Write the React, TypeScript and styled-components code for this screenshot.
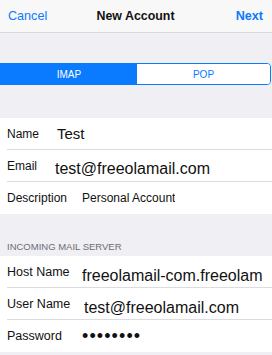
import React from "react";
import styled, { createGlobalStyle } from "styled-components";

const Global = createGlobalStyle`
  html, body { margin: 0; padding: 0; background: #efeff4; overflow: hidden; }
  body { font-family: "Liberation Sans", Arial, sans-serif; -webkit-font-smoothing: antialiased; }
  * { box-sizing: border-box; }
`;

const Screen = styled.div`
  width: 272px;
  height: 355px;
  background: #efeff4;
  overflow: hidden;
  display: flex;
  flex-direction: column;
`;

const NavBar = styled.div`
  height: 33px;
  flex: none;
  display: grid;
  grid-template-columns: 1fr auto 1fr;
  align-items: center;
  padding: 0 9px 1px 8px;
  background: #f8f8f8;
  border-bottom: 1px solid #d9d9dc;
`;

const NavButton = styled.span<{ $bold?: boolean; $end?: boolean }>`
  color: #0a7aff;
  font-size: 12.6px;
  font-weight: ${(p) => (p.$bold ? 700 : 400)};
  justify-self: ${(p) => (p.$end ? "end" : "start")};
`;

const Title = styled.span`
  font-size: 12.4px;
  font-weight: 700;
  color: #111;
`;

const SegmentWrap = styled.div`
  padding: 30px 1px 33px 0;
  flex: none;
`;

const Segmented = styled.div`
  display: grid;
  grid-template-columns: 141px 1fr;
  height: 22px;
  margin-left: -5px;
  border: 1px solid #0a7aff;
  border-radius: 4px;
  overflow: hidden;
  background: #fff;
`;

const Segment = styled.div<{ $active?: boolean }>`
  display: flex;
  align-items: center;
  justify-content: center;
  padding-left: ${(p) => (p.$active ? "5px" : "0")};
  font-size: 10px;
  color: ${(p) => (p.$active ? "#fff" : "#0a7aff")};
  background: ${(p) => (p.$active ? "#0a7aff" : "#fff")};
`;

const Section = styled.div`
  background: #fff;
  flex: none;
`;

const Row = styled.div<{ $last?: boolean }>`
  height: 32px;
  display: flex;
  align-items: flex-start;
  padding-left: 7px;
  border-bottom: ${(p) => (p.$last ? "none" : "1px solid transparent")};
  background-image: ${(p) =>
    p.$last ? "none" : "linear-gradient(#dcdce0, #dcdce0)"};
  background-repeat: no-repeat;
  background-size: calc(100% - 7px) 1px;
  background-position: 7px 100%;
  background-origin: border-box;
`;

const Label = styled.span<{ $w: number; $size?: number }>`
  width: ${(p) => p.$w}px;
  flex: none;
  font-size: ${(p) => p.$size ?? 12}px;
  line-height: 14px;
  padding-top: 9px;
  color: #111;
  white-space: nowrap;
`;

const Value = styled.span<{ $size: number; $drop: number }>`
  font-size: ${(p) => p.$size}px;
  line-height: ${(p) => p.$size + 2}px;
  padding-top: ${(p) => p.$drop}px;
  color: #111;
  white-space: nowrap;
  overflow: hidden;
`;

const Dots = styled.span`
  font-size: 18px;
  line-height: 20px;
  padding-top: 6px;
  letter-spacing: 1.1px;
  color: #111;
`;

const SectionHeader = styled.div`
  height: 42px;
  flex: none;
  display: flex;
  align-items: flex-end;
  padding: 0 0 4px 7px;
  font-size: 9.5px;
  line-height: 11px;
  color: #6d6d72;
`;

export default function App() {
  return (
    <Screen>
      <Global />
      <NavBar>
        <NavButton>Cancel</NavButton>
        <Title>New Account</Title>
        <NavButton $bold $end>
          Next
        </NavButton>
      </NavBar>
      <SegmentWrap>
        <Segmented>
          <Segment $active>IMAP</Segment>
          <Segment>POP</Segment>
        </Segmented>
      </SegmentWrap>
      <Section>
        <Row>
          <Label $w={50}>Name</Label>
          <Value $size={15} $drop={7}>
            Test
          </Value>
        </Row>
        <Row>
          <Label $w={48}>Email</Label>
          <Value $size={16} $drop={10}>
            test@freeolamail.com
          </Value>
        </Row>
        <Row $last>
          <Label $w={75}>Description</Label>
          <Value $size={12} $drop={9}>
            Personal Account
          </Value>
        </Row>
      </Section>
      <SectionHeader>INCOMING MAIL SERVER</SectionHeader>
      <Section>
        <Row>
          <Label $w={75} $size={12.5}>
            Host Name
          </Label>
          <Value $size={16} $drop={10.5}>
            freeolamail-com.freeolam
          </Value>
        </Row>
        <Row>
          <Label $w={77} $size={12.5}>
            User Name
          </Label>
          <Value $size={16} $drop={11}>
            test@freeolamail.com
          </Value>
        </Row>
        <Row $last>
          <Label $w={75} $size={12.5}>
            Password
          </Label>
          <Dots>••••••••</Dots>
        </Row>
      </Section>
    </Screen>
  );
}
